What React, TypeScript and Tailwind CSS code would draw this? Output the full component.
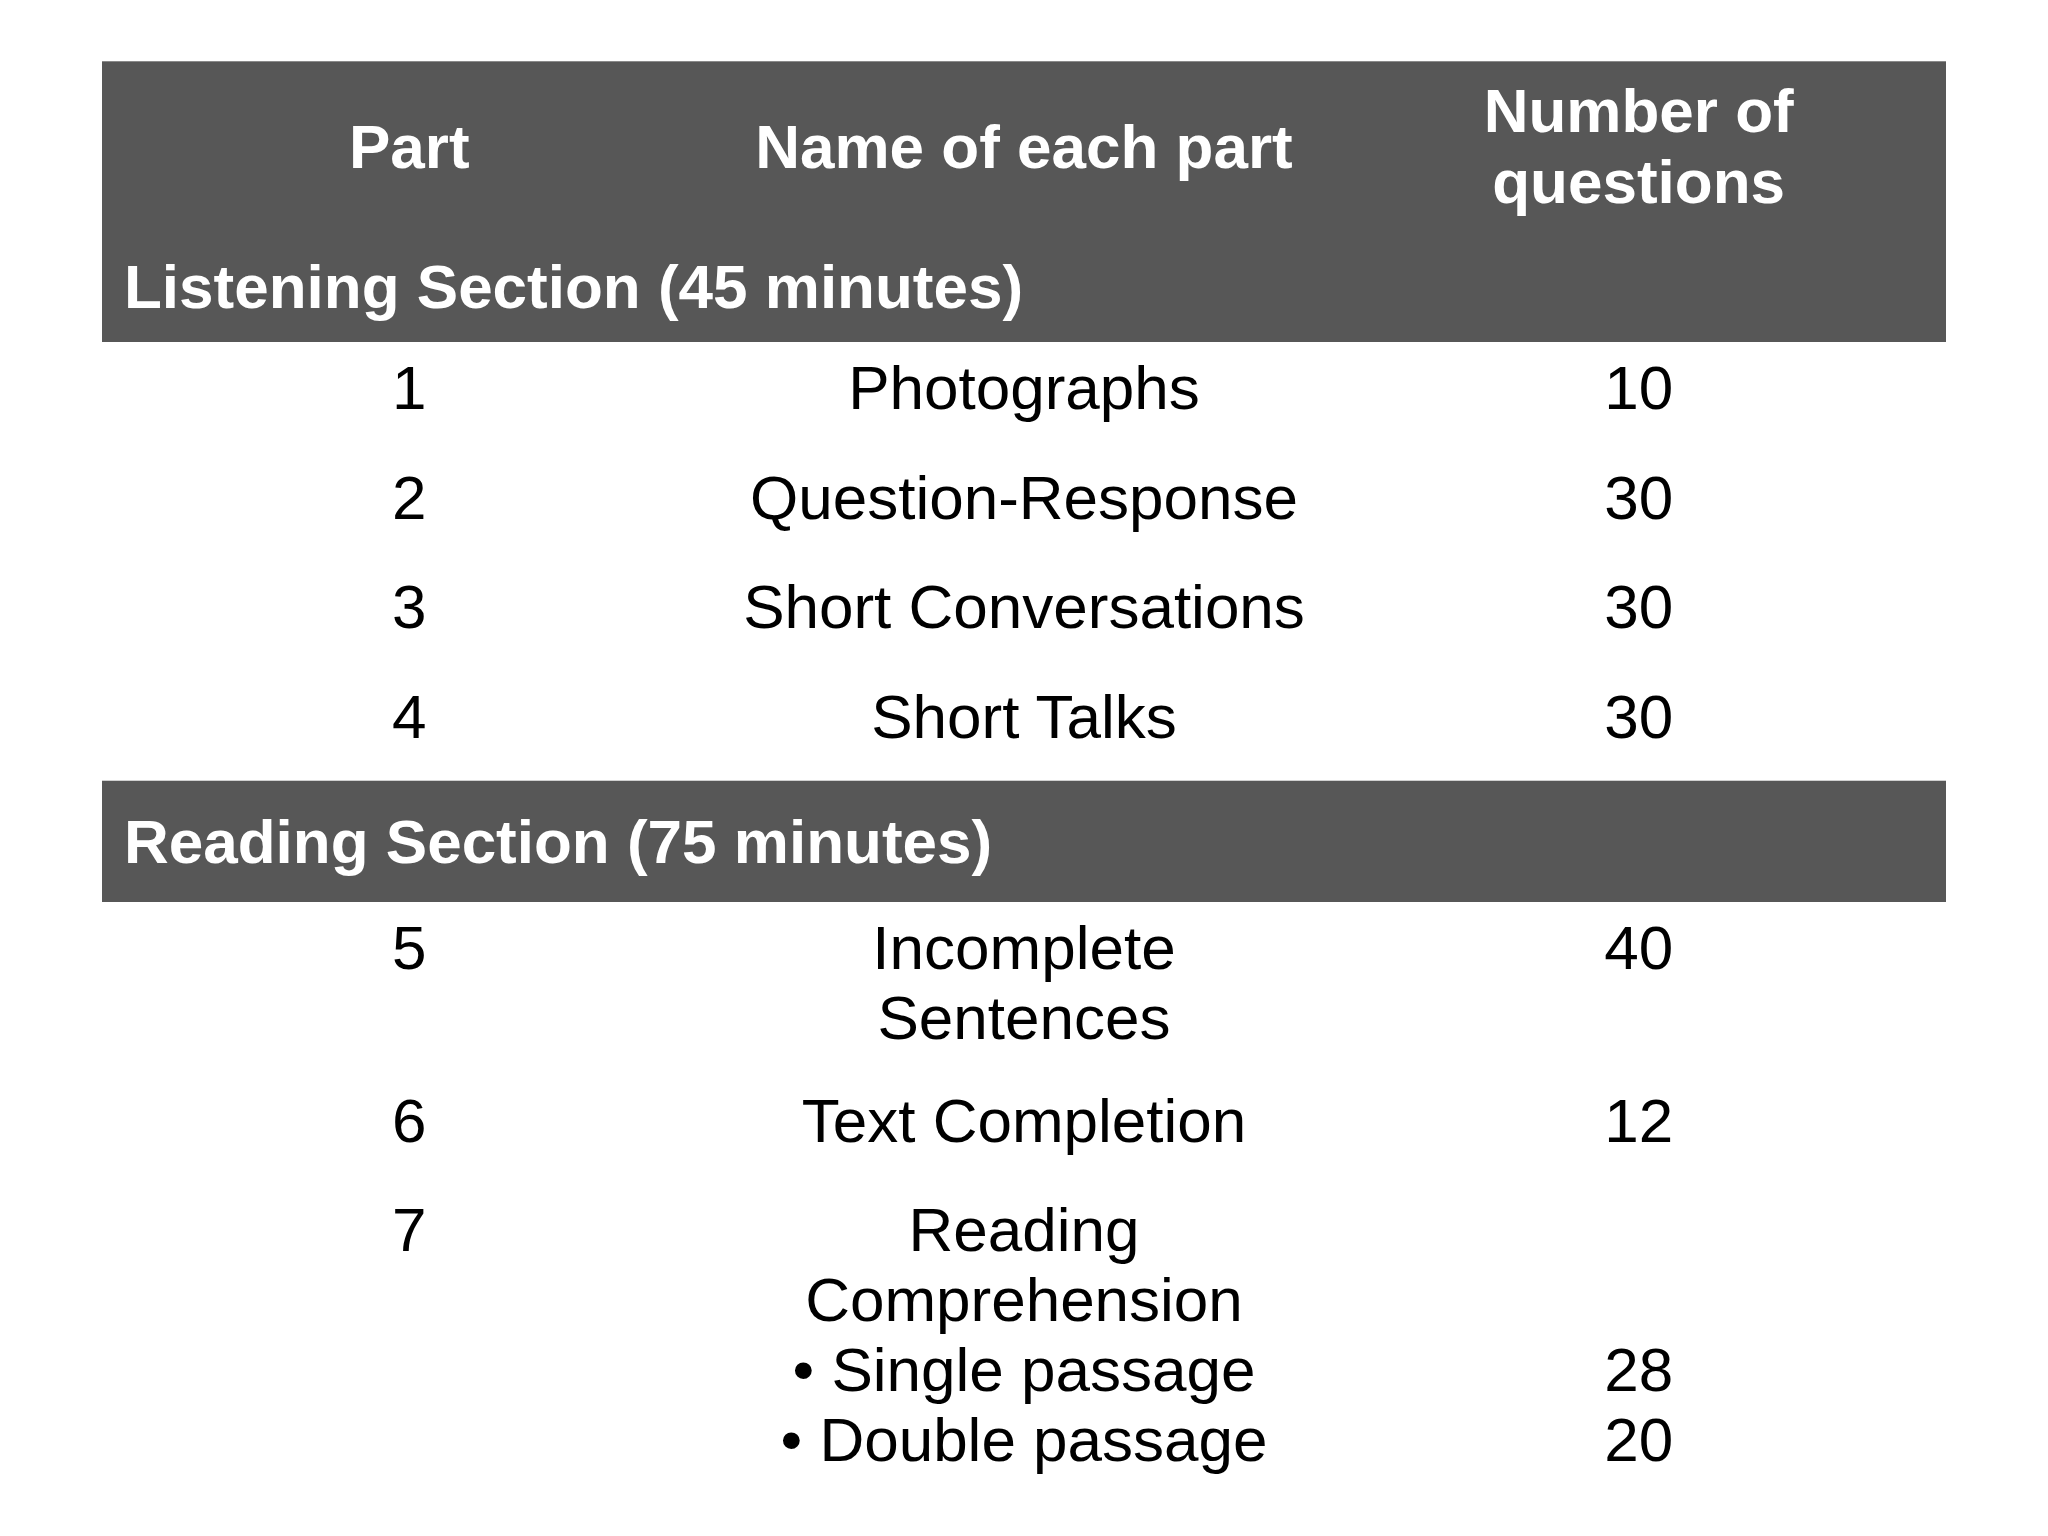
const font = "font-['Liberation_Sans',Arial,sans-serif]";

type Row = { part: string; name: string[]; count: string[]; h: string };

const listening: Row[] = [
  { part: "1", name: ["Photographs"], count: ["10"], h: "h-[110px]" },
  { part: "2", name: ["Question-Response"], count: ["30"], h: "h-[109px]" },
  { part: "3", name: ["Short Conversations"], count: ["30"], h: "h-[110px]" },
  { part: "4", name: ["Short Talks"], count: ["30"], h: "h-[109px]" },
];

const reading: Row[] = [
  { part: "5", name: ["Incomplete", "Sentences"], count: ["40"], h: "h-[173px]" },
  { part: "6", name: ["Text Completion"], count: ["12"], h: "h-[109px]" },
  {
    part: "7",
    name: ["Reading", "Comprehension", "• Single passage", "• Double passage"],
    count: ["\u00a0", "\u00a0", "28", "20"],
    h: "h-[300px]",
  },
];

function DataRow({ row }: { row: Row }) {
  return (
    <div className={`grid grid-cols-3 pt-[11px] text-center text-[62px] leading-[70px] text-black ${row.h}`}>
      <div>{row.part}</div>
      <div>
        {row.name.map((n, i) => (
          <div key={i}>{n}</div>
        ))}
      </div>
      <div>
        {row.count.map((c, i) => (
          <div key={i}>{c}</div>
        ))}
      </div>
    </div>
  );
}

export default function App() {
  return (
    <div className={`min-h-screen w-full bg-white ${font}`}>
      <div className="ml-[102px] w-[1844px] pt-[61px]">
        <div className="border-t border-[#8a8a8a] bg-[#575757] font-bold text-white">
          <div className="grid h-[168px] grid-cols-3 items-center text-center text-[62px] leading-[71px]">
            <div>Part</div>
            <div>Name of each part</div>
            <div>
              Number of
              <br />
              questions
            </div>
          </div>
          <div className="flex h-[112px] items-center pl-[22px] text-[62px] leading-[71px]">
            Listening Section (45 minutes)
          </div>
        </div>

        {listening.map((r) => (
          <DataRow key={r.part} row={r} />
        ))}

        <div className="flex h-[122px] items-center border-t border-[#d0d0d0] bg-[#575757] pl-[22px] text-[62px] font-bold leading-[71px] text-white">
          Reading Section (75 minutes)
        </div>

        {reading.map((r) => (
          <DataRow key={r.part} row={r} />
        ))}
      </div>
    </div>
  );
}
